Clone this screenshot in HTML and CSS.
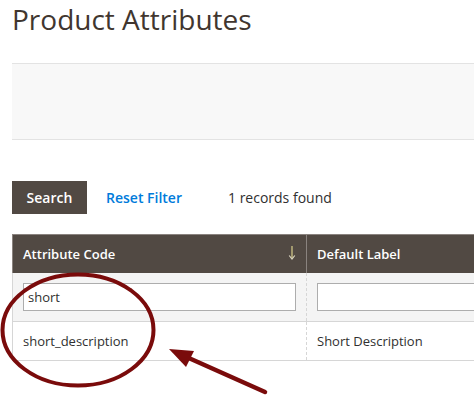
FILE: index.html
```html
<!DOCTYPE html>
<html>
<head>
<meta charset="utf-8">
<link rel="stylesheet" href="styles.css">
</head>
<body>
<div class="page">
  <h1 class="title">Product Attributes</h1>
  <div class="actions-bar"></div>
  <div class="toolbar">
    <button class="btn-search">Search</button>
    <a class="reset">Reset Filter</a>
    <span class="count">1 records found</span>
  </div>
  <table class="grid">
    <colgroup>
      <col class="col1">
      <col class="col2">
    </colgroup>
    <thead>
      <tr class="head">
        <th class="c1">Attribute Code<svg class="sort" width="8" height="14" viewBox="0 0 8 14"><line x1="4" y1="0" x2="4" y2="12" stroke="#d9cf8c" stroke-width="1.2"/><path d="M1.2 9.5 L4 13 L6.8 9.5" fill="none" stroke="#d9d4c0" stroke-width="1.2"/></svg></th>
        <th class="c2">Default Label</th>
      </tr>
      <tr class="filters">
        <td class="c1"><input class="inp" type="text" value="short"></td>
        <td class="c2"><input class="inp" type="text" value=""></td>
      </tr>
    </thead>
    <tbody>
      <tr class="row">
        <td class="c1">short_description</td>
        <td class="c2">Short Description</td>
      </tr>
    </tbody>
  </table>
  <svg class="annot" width="474" height="415" viewBox="0 0 474 415">
    <ellipse cx="78" cy="330" rx="75.5" ry="55.5" fill="none" stroke="#7a0b0b" stroke-width="4"/>
    <line x1="265" y1="392" x2="182" y2="355" stroke="#7a0b0b" stroke-width="4.5" stroke-linecap="round"/>
    <polygon points="169,349 194,351 186,367" fill="#7a0b0b"/>
  </svg>
</div>
</body>
</html>
```
FILE: styles.css
```css
html, body {
  margin: 0;
  padding: 0;
  background: #fff;
  overflow: hidden;
}
.page {
  position: relative;
  width: 474px;
  height: 415px;
  overflow: hidden;
  font-family: "Open Sans", "Noto Sans", sans-serif;
  color: #303030;
}
.title {
  margin: 0;
  padding: 1px 0 0 12px;
  font-size: 28px;
  font-weight: 400;
  line-height: 36px;
  color: #41362f;
}
.actions-bar {
  margin: 26px 0 0 12px;
  height: 75px;
  background: #f8f8f8;
  border-top: 1px solid #e3e3e3;
  border-bottom: 1px solid #e3e3e3;
}
.toolbar {
  display: flex;
  align-items: center;
  margin: 41px 0 0 12px;
  height: 33px;
}
.btn-search {
  height: 33px;
  width: 75px;
  border: 0;
  padding: 0;
  background: #514943;
  color: #fff;
  font-family: "Open Sans", "Noto Sans", sans-serif;
  font-size: 14px;
  font-weight: 600;
}
.reset {
  margin-left: 19px;
  color: #007bdb;
  font-size: 14px;
  font-weight: 600;
}
.count {
  margin-left: 46px;
  font-size: 14px;
  color: #303030;
}
.grid {
  margin: 20px 0 0 12px;
  width: 600px;
  border-collapse: collapse;
  table-layout: fixed;
}
.col1 { width: 294px; }
.head th {
  position: relative;
  height: 38px;
  padding: 0 10px;
  background: #514943;
  color: #fff;
  font-size: 13px;
  font-weight: 600;
  text-align: left;
  border-top: 1px solid #8a837f;
  border-left: 1px solid #8a837f;
}
.sort {
  position: absolute;
  right: 10px;
  top: 11px;
}
.filters td {
  height: 48px;
  padding: 0 10px;
  background: #f4f4f4;
  border-bottom: 1px solid #d6d6d6;
  border-left: 1px dashed #d6d6d6;
}
.filters td.c1 { border-left: 1px solid #d6d6d6; }
.inp {
  display: block;
  box-sizing: border-box;
  width: 100%;
  height: 28px;
  margin: 0;
  padding: 0 4px;
  border: 1px solid #adadad;
  background: #fff;
  font-family: "Open Sans", "Noto Sans", sans-serif;
  font-size: 13px;
  color: #303030;
  outline: none;
}
.row td {
  height: 38px;
  padding: 0 10px;
  font-size: 13px;
  color: #303030;
  border-bottom: 1px solid #d6d6d6;
  border-left: 1px dashed #d6d6d6;
}
.row td.c1 { border-left: 1px solid #d6d6d6; }
.annot {
  position: absolute;
  left: 0;
  top: 0;
  pointer-events: none;
}
```
